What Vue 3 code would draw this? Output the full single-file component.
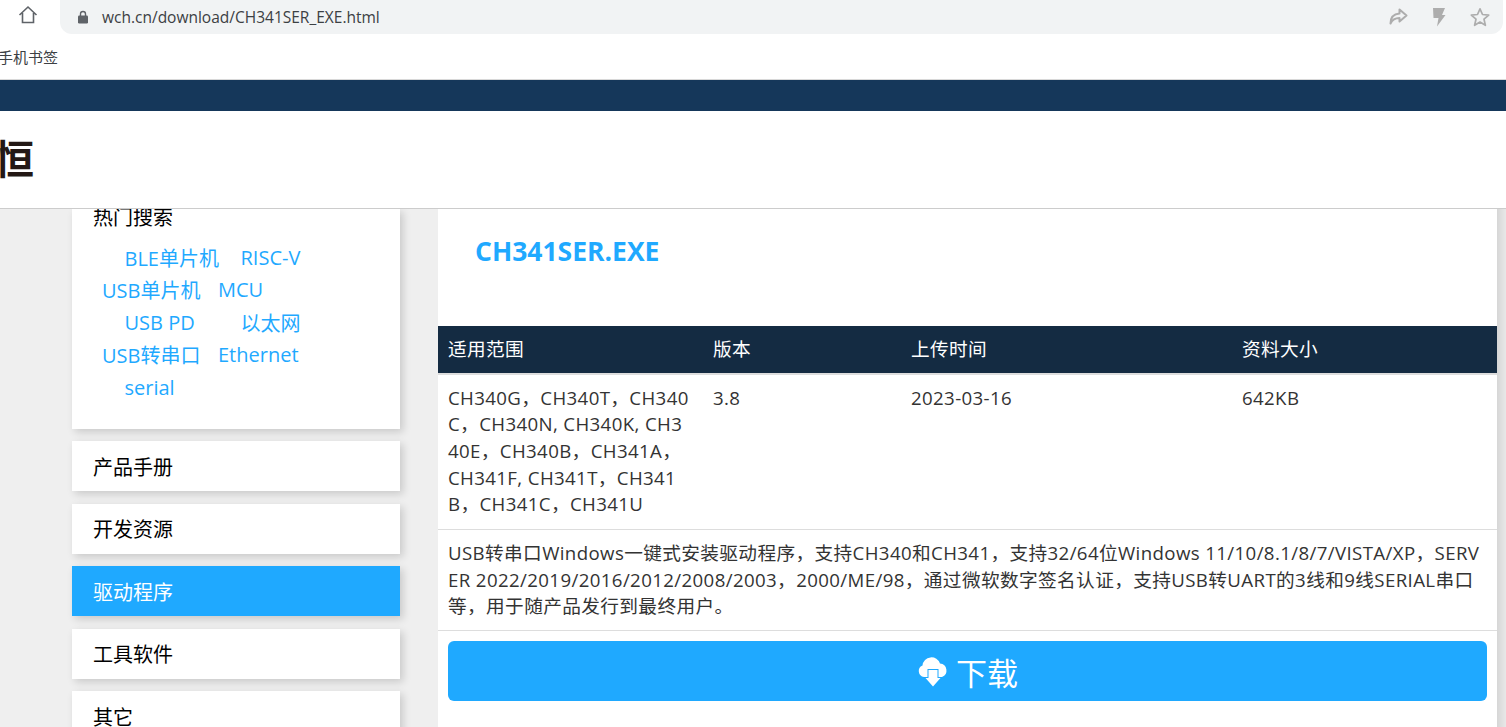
<template>
  <div class="page">
    <div class="toolbar">
      <svg class="home-icon" width="20" height="20" viewBox="0 0 20 20">
        <path d="M1.500 10 10 2l8.500 8M4.500 8v9.500h11V8" fill="none" stroke="#5f6368" stroke-width="1.600" />
      </svg>
      <div class="address">
        <svg class="lock" width="12" height="14" viewBox="0 0 12 14">
          <path d="M3.500 6V4a2.500 2.500 0 0 1 5 0v2" fill="none" stroke="#5f6368" stroke-width="1.400" />
          <rect x="1" y="5.500" width="10" height="8" rx="1.200" fill="#5f6368" />
        </svg>
        <span class="url">wch.cn/download/CH341SER_EXE.html</span>
        <div class="address-actions">
          <svg width="20" height="20" viewBox="0 0 20 20">
            <path d="M11.500 2.500 18.500 8.500l-7 6v-3.500c-4 0-7 1-9 5.500 0-6 3-9.500 9-10z" fill="none" stroke="#adadad" stroke-width="2" stroke-linejoin="round" />
          </svg>
          <svg width="20" height="20" viewBox="0 0 20 20">
            <path d="M4 1h12l-3 7h3.500L8 19.500l1.500-8.500H4.500z" fill="#adadad" />
          </svg>
          <svg width="20" height="20" viewBox="0 0 20 20">
            <path d="M10 1.800 12.500 7.500l6.200.6-4.700 4.100 1.400 6.100L10 15l-5.400 3.300 1.400-6.100L1.300 8.100l6.200-.6z" fill="none" stroke="#adadad" stroke-width="1.700" stroke-linejoin="round" />
          </svg>
        </div>
      </div>
    </div>

    <div class="bookmarks"><span>手机书签</span></div>
    <div class="topbar"></div>
    <div class="brand"><span>恒</span></div>

    <div class="content">
      <aside class="sidebar">
        <div class="card hot">
          <div class="hot-title">热门搜索</div>
          <div v-for="(row, i) in hotRows" :key="i" class="hot-row" :class="{ shifted: i % 2 === 0 }">
            <a v-for="link in row" :key="link" class="hot-link">{{ link }}</a>
          </div>
        </div>
        <div
          v-for="item in menu"
          :key="item"
          class="card menu-item"
          :class="{ active: item === '驱动程序' }"
        >
          {{ item }}
        </div>
      </aside>

      <main class="main">
        <h1 class="title">CH341SER.EXE</h1>
        <div class="table-row table-head">
          <div v-for="h in heads" :key="h" class="cell">{{ h }}</div>
        </div>
        <div class="table-row table-body">
          <div class="cell">
            <div v-for="line in scopeLines" :key="line">{{ line }}</div>
          </div>
          <div class="cell">3.8</div>
          <div class="cell">2023-03-16</div>
          <div class="cell">642KB</div>
        </div>
        <div class="desc">
          <div v-for="line in descLines" :key="line">{{ line }}</div>
        </div>
        <div class="download-wrap">
          <button class="download">
            <svg width="32" height="31" viewBox="1 0 30 31">
              <path d="M7 21a6 6 0 0 1-1.500-11.500A9 9 0 0 1 23 7.500 7 7 0 0 1 25 21z" fill="#fff" />
              <path d="M11.500 14h9v8h3L16 30.500 8.500 22h3z" fill="#fff" stroke="#1fa9ff" stroke-width="2" paint-order="stroke" />
            </svg>
            <span>下载</span>
          </button>
        </div>
      </main>
      <div class="scroll-edge"></div>
    </div>
  </div>
</template>

<script setup>
const hotRows = [
  ['BLE单片机', 'RISC-V'],
  ['USB单片机', 'MCU'],
  ['USB PD', '以太网'],
  ['USB转串口', 'Ethernet'],
  ['serial']
]

const menu = ['产品手册', '开发资源', '驱动程序', '工具软件', '其它']

const heads = ['适用范围', '版本', '上传时间', '资料大小']

const scopeLines = [
  'CH340G，CH340T，CH340',
  'C，CH340N, CH340K, CH3',
  '40E，CH340B，CH341A，',
  'CH341F, CH341T，CH341',
  'B，CH341C，CH341U'
]

const descLines = [
  'USB转串口Windows一键式安装驱动程序，支持CH340和CH341，支持32/64位Windows 11/10/8.1/8/7/VISTA/XP，SERV',
  'ER 2022/2019/2016/2012/2008/2003，2000/ME/98，通过微软数字签名认证，支持USB转UART的3线和9线SERIAL串口',
  '等，用于随产品发行到最终用户。'
]
</script>

<style>
html,
body {
  margin: 0;
  overflow: hidden;
}
</style>

<style scoped>
.page {
  height: 727px;
  overflow: hidden;
  display: flex;
  flex-direction: column;
  background: #fff;
  font-family: "Open Sans", "Noto Sans CJK SC", sans-serif;
  color: #333;
}

.toolbar {
  height: 34px;
  display: flex;
  flex-shrink: 0;
}

.home-icon {
  margin: 5px 0 0 18px;
}

.address {
  margin-left: 22px;
  width: 1443px;
  background: #f1f3f4;
  border-radius: 0 0 12px 12px;
  display: flex;
  align-items: center;
  padding-left: 17px;
  box-sizing: border-box;
}

.lock {
  margin-right: 13px;
}

.url {
  font-size: 15.500px;
  color: #3c4043;
}

.address-actions {
  margin-left: auto;
  margin-right: 13px;
  display: flex;
  gap: 21px;
}

.bookmarks {
  height: 46px;
  flex-shrink: 0;
  box-sizing: border-box;
  border-bottom: 1px solid #d8d8d8;
  display: flex;
  align-items: center;
  font-size: 15px;
  color: #3c4043;
}

.bookmarks span {
  margin-left: -2px;
}

.topbar {
  height: 31px;
  flex-shrink: 0;
  background: #15375a;
}

.brand {
  height: 98px;
  flex-shrink: 0;
  box-sizing: border-box;
  border-bottom: 1px solid #ccc;
  padding-bottom: 5px;
  display: flex;
  align-items: center;
  font-size: 40px;
  font-weight: 700;
  color: #231815;
}

.brand span {
  margin-left: -6px;
}

.content {
  flex: 1;
  min-height: 0;
  display: flex;
  background: #efefef;
  overflow: hidden;
}

.sidebar {
  width: 328px;
  margin-left: 72px;
  flex-shrink: 0;
  display: flex;
  flex-direction: column;
  gap: 12.500px;
}

.card {
  background: #fff;
  box-shadow: 3px 3px 8px rgba(0, 0, 0, 0.16);
  flex-shrink: 0;
}

.hot {
  height: 219.500px;
  box-sizing: border-box;
  overflow: hidden;
}

.hot-title {
  font-size: 20px;
  line-height: 28px;
  color: #000;
  padding-left: 21px;
  margin-top: -5px;
  margin-bottom: 9px;
}

.hot-row {
  display: flex;
  height: 32.500px;
  align-items: center;
  padding-left: 30px;
}

.hot-row.shifted {
  padding-left: 52.500px;
}

.hot-link {
  width: 116px;
  font-size: 20px;
  color: #1fa9ff;
  white-space: nowrap;
}

.menu-item {
  height: 50px;
  display: flex;
  align-items: center;
  padding-left: 21px;
  font-size: 20px;
  color: #000;
}

.menu-item.active {
  background: #1fa9ff;
  color: #fff;
}

.main {
  width: 1059px;
  margin-left: 38px;
  flex-shrink: 0;
  background: #fff;
}

.title {
  margin: 0;
  height: 117px;
  padding: 25px 0 0 37px;
  box-sizing: border-box;
  font-size: 26.500px;
  line-height: 34px;
  font-weight: 700;
  color: #1fa9ff;
}

.table-row {
  display: grid;
  grid-template-columns: 265px 198px 331px 265px;
  font-size: 18.670px;
  line-height: 26.670px;
  letter-spacing: 0.370px;
}

.cell {
  padding: 10px;
  white-space: nowrap;
}

.table-head {
  background: #142b42;
  color: #fff;
  border-bottom: 2px solid #ddd;
}

.table-body {
  border-bottom: 1px solid #ddd;
  padding-bottom: 1px;
}

.desc {
  padding: 10px;
  font-size: 18.670px;
  line-height: 26.670px;
  letter-spacing: 0.380px;
  border-bottom: 1px solid #ddd;
  white-space: nowrap;
}

.download-wrap {
  padding: 10px;
}

.download {
  width: 100%;
  height: 60px;
  border: none;
  border-radius: 6px;
  background: #1fa9ff;
  color: #fff;
  font-family: inherit;
  font-size: 31px;
  display: flex;
  align-items: center;
  justify-content: center;
  gap: 7px;
}

.scroll-edge {
  flex: 1;
  background: linear-gradient(to right, #d6d6d6, #e8e8e8);
}
</style>
